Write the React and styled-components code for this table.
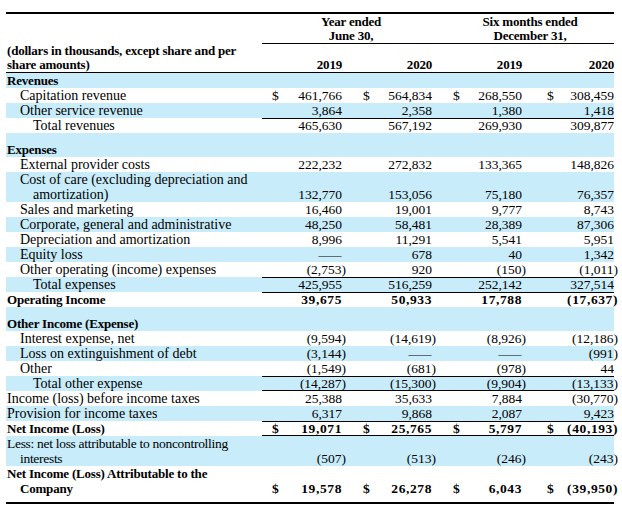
import React from 'react';
import styled, { createGlobalStyle } from 'styled-components';

const GlobalStyle = createGlobalStyle`
  body {
    margin: 0;
    background: #fff;
  }
`;

const Page = styled.div`
  padding: 12px 0 0 6px;
  font-family: "Liberation Serif", "Times New Roman", serif;
  color: #000;
`;

const Sheet = styled.div`
  width: 608px;
  border-top: 2px solid #000;
  border-bottom: 2px solid #000;
  padding-bottom: 6px;
`;

const Table = styled.table`
  width: 608px;
  border-collapse: collapse;
  table-layout: fixed;
  font-size: 14px;
  line-height: 15px;
`;

// rules under/over the figures are painted, so they take no height
const rule = (top, bottom) => {
  const parts = [];
  if (top) parts.push('linear-gradient(#000, #000) left top / 100% 1px no-repeat');
  if (bottom) parts.push('linear-gradient(#000, #000) left bottom / 100% 1px no-repeat');
  return parts.length ? parts.join(', ') : 'none';
};

const Row = styled.tr`
  background: ${(p) => (p.$shade ? '#c8ecfa' : 'transparent')};
  & > td:not(:first-child) {
    background: ${(p) => rule(p.$over, p.$under)};
  }
`;

const HeadRow = styled.tr`
  & > th {
    padding: 0;
    font-weight: 700;
    font-size: 13px;
    line-height: 14px;
    letter-spacing: -0.2px;
  }
`;

const YearRow = styled(HeadRow)`
  & > th {
    border-bottom: 1px solid #000;
    vertical-align: bottom;
  }
`;

const GroupHead = styled.th`
  text-align: center;
  padding-top: 1px !important;
  padding-left: ${(p) => p.$shift}px !important;
  border-bottom: 1px solid #000;
`;

const UnitsHead = styled.th`
  text-align: left;
  padding: 0 4px 0 1px !important;
`;

const YearHead = styled.th`
  text-align: right;
`;

const Label = styled.td`
  padding: 0 4px 0 ${(p) => p.$indent * 13 + 14}px;
  text-indent: -13px;
  vertical-align: bottom;
  font-weight: ${(p) => (p.$bold ? 700 : 400)};
  font-size: ${(p) => (p.$bold ? '13px' : p.$tight ? '13.5px' : '14px')};
  letter-spacing: ${(p) => (p.$bold ? '-0.2px' : p.$tight ? '-0.3px' : 'normal')};
`;

const Cur = styled.td`
  padding: 0 0 0 ${(p) => p.$pad}px;
  vertical-align: bottom;
  font-size: 13.5px;
  font-weight: ${(p) => (p.$bold ? 700 : 400)};
`;

const Num = styled.td`
  padding: 0;
  text-align: right;
  vertical-align: bottom;
  white-space: nowrap;
  font-size: 13.5px;
  letter-spacing: ${(p) => (p.$bold ? '0.6px' : 'normal')};
  font-weight: ${(p) => (p.$bold ? 700 : 400)};
`;

const Gap = styled.td`
  height: 9px;
  padding: 0;
`;

const Paren = styled.span`
  margin-right: -4px;
`;

const Dash = styled.span`
  display: inline-block;
  transform: scaleX(1.7);
  transform-origin: right center;
  margin-right: 1px;
`;

const widths = [256, 23, 57, 33, 57, 33, 57, 35, 57];
const curPad = [10, 21, 21, 25];

const rows = [
  { label: 'Revenues', bold: true, shade: true },
  { label: 'Capitation revenue', indent: 1, dollar: true, vals: ['461,766', '564,834', '268,550', '308,459'] },
  { label: 'Other service revenue', indent: 1, shade: true, vals: ['3,864', '2,358', '1,380', '1,418'] },
  { label: 'Total revenues', indent: 2, over: true, vals: ['465,630', '567,192', '269,930', '309,877'] },
  { gap: true, shade: true },
  { label: 'Expenses', bold: true, shade: true },
  { label: 'External provider costs', indent: 1, vals: ['222,232', '272,832', '133,365', '148,826'] },
  { label: 'Cost of care (excluding depreciation and amortization)', indent: 1, shade: true, vals: ['132,770', '153,056', '75,180', '76,357'] },
  { label: 'Sales and marketing', indent: 1, vals: ['16,460', '19,001', '9,777', '8,743'] },
  { label: 'Corporate, general and administrative', indent: 1, shade: true, vals: ['48,250', '58,481', '28,389', '87,306'] },
  { label: 'Depreciation and amortization', indent: 1, vals: ['8,996', '11,291', '5,541', '5,951'] },
  { label: 'Equity loss', indent: 1, shade: true, vals: ['—', '678', '40', '1,342'] },
  { label: 'Other operating (income) expenses', indent: 1, vals: ['(2,753)', '920', '(150)', '(1,011)'] },
  { label: 'Total expenses', indent: 2, shade: true, over: true, vals: ['425,955', '516,259', '252,142', '327,514'] },
  { label: 'Operating Income', bold: true, over: true, vals: ['39,675', '50,933', '17,788', '(17,637)'] },
  { gap: true, shade: true },
  { label: 'Other Income (Expense)', bold: true, shade: true },
  { label: 'Interest expense, net', indent: 1, vals: ['(9,594)', '(14,619)', '(8,926)', '(12,186)'] },
  { label: 'Loss on extinguishment of debt', indent: 1, shade: true, vals: ['(3,144)', '—', '—', '(991)'] },
  { label: 'Other', indent: 1, vals: ['(1,549)', '(681)', '(978)', '44'] },
  { label: 'Total other expense', indent: 2, shade: true, over: true, under: true, vals: ['(14,287)', '(15,300)', '(9,904)', '(13,133)'] },
  { label: 'Income (loss) before income taxes', vals: ['25,388', '35,633', '7,884', '(30,770)'] },
  { label: 'Provision for income taxes', shade: true, vals: ['6,317', '9,868', '2,087', '9,423'] },
  { label: 'Net Income (Loss)', bold: true, dollar: true, over: true, under: true, vals: ['19,071', '25,765', '5,797', '(40,193)'] },
  { label: 'Less: net loss attributable to noncontrolling interests', tight: true, shade: true, vals: ['(507)', '(513)', '(246)', '(243)'] },
  { label: 'Net Income (Loss) Attributable to the Company', bold: true, dollar: true, vals: ['19,578', '26,278', '6,043', '(39,950)'] },
];

function Amount({ v }) {
  if (v === '—') return <Dash>—</Dash>;
  if (v.endsWith(')')) {
    return (
      <>
        {v.slice(0, -1)}
        <Paren>)</Paren>
      </>
    );
  }
  return v;
}

function Line({ r }) {
  if (r.gap) {
    return (
      <Row $shade={r.shade}>
        <Gap colSpan={9} />
      </Row>
    );
  }
  const vals = r.vals || ['', '', '', ''];
  return (
    <Row $shade={r.shade} $over={r.over} $under={r.under}>
      <Label $indent={r.indent || 0} $bold={r.bold} $tight={r.tight}>{r.label}</Label>
      {vals.map((v, i) => (
        <React.Fragment key={i}>
          <Cur $pad={curPad[i]} $bold={r.bold}>{r.dollar ? '$' : ''}</Cur>
          <Num $bold={r.bold}>{v ? <Amount v={v} /> : ''}</Num>
        </React.Fragment>
      ))}
    </Row>
  );
}

export default function App() {
  return (
    <Page>
      <GlobalStyle />
      <Sheet>
        <Table>
          <colgroup>
            {widths.map((w, i) => (
              <col key={i} style={{ width: w }} />
            ))}
          </colgroup>
          <thead>
            <HeadRow>
              <th />
              <GroupHead colSpan={4} $shift={8}>
                Year ended
                <br />
                June 30,
              </GroupHead>
              <GroupHead colSpan={4} $shift={14}>
                Six months ended
                <br />
                December 31,
              </GroupHead>
            </HeadRow>
            <YearRow>
              <UnitsHead>(dollars in thousands, except share and per share amounts)</UnitsHead>
              <YearHead colSpan={2}>2019</YearHead>
              <YearHead colSpan={2}>2020</YearHead>
              <YearHead colSpan={2}>2019</YearHead>
              <YearHead colSpan={2}>2020</YearHead>
            </YearRow>
          </thead>
          <tbody>
            {rows.map((r, i) => (
              <Line key={i} r={r} />
            ))}
          </tbody>
        </Table>
      </Sheet>
    </Page>
  );
}
